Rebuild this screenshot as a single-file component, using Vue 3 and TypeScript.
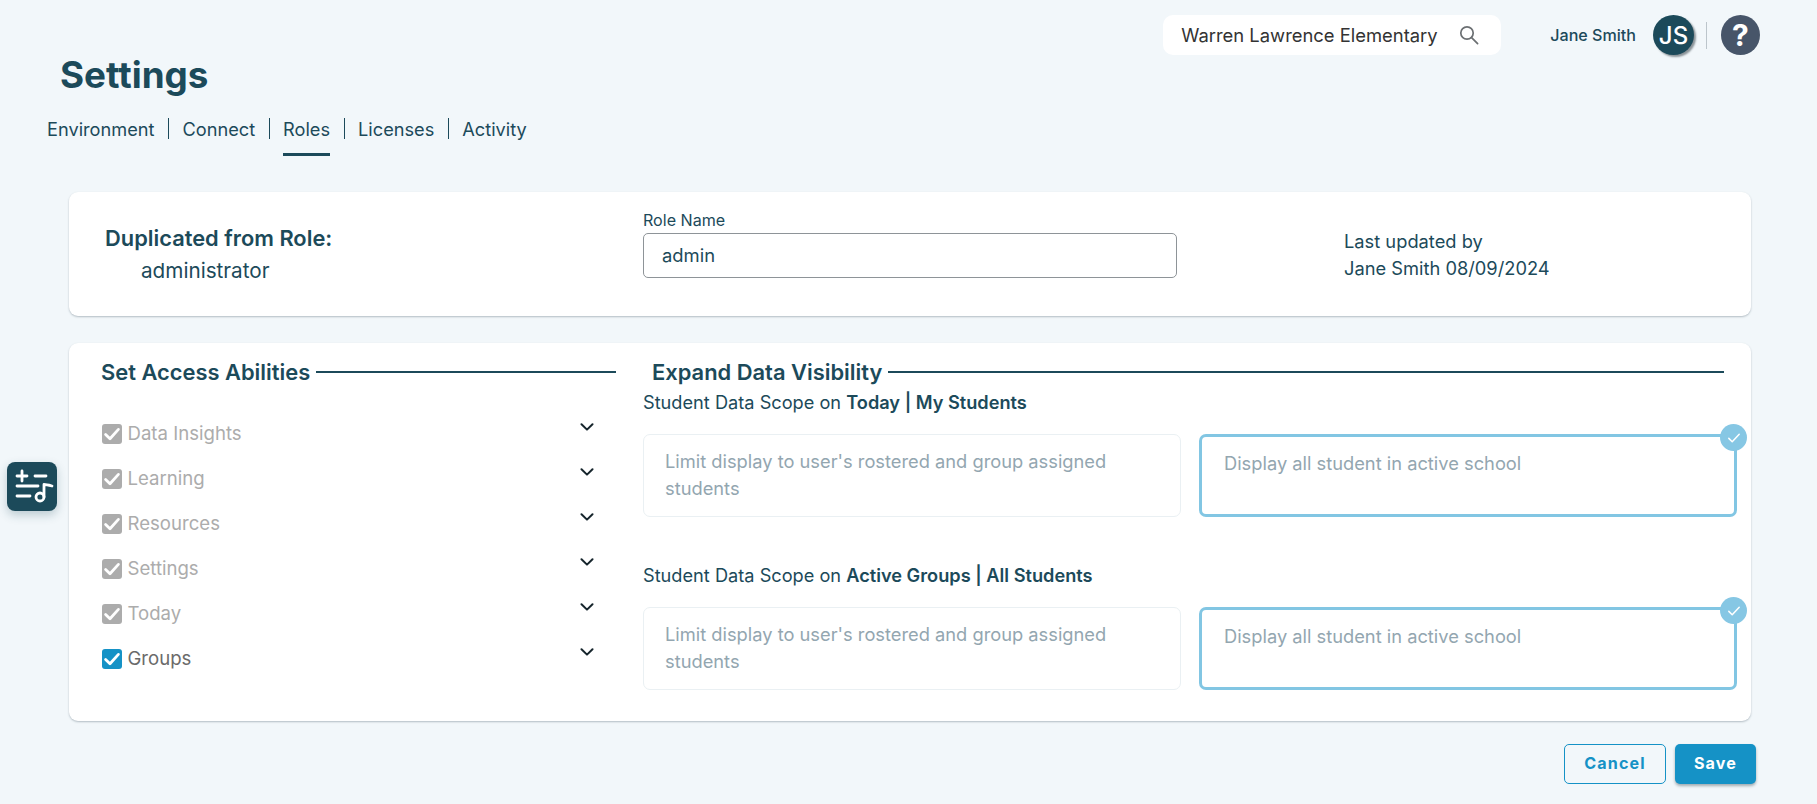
<script setup lang="ts">
interface Ability { label: string; active?: boolean }
const tabs: string[] = ['Environment', 'Connect', 'Roles', 'Licenses', 'Activity']
const abilities: Ability[] = [
  { label: 'Data Insights' },
  { label: 'Learning' },
  { label: 'Resources' },
  { label: 'Settings' },
  { label: 'Today' },
  { label: 'Groups', active: true },
]
const scopes = [
  { prefix: 'Student Data Scope on ', name: 'Today | My Students' },
  { prefix: 'Student Data Scope on ', name: 'Active Groups | All Students' },
]
</script>

<template>
  <div class="page">
    <header class="topbar">
      <div class="search">
        <span class="school">Warren Lawrence Elementary</span>
        <svg class="search-icon" viewBox="0 0 20 20" width="20" height="20" fill="none" stroke="#6b6f72" stroke-width="1.7">
          <circle cx="8" cy="8" r="6.2" />
          <path d="M12.6 12.6 L18.6 18.6" stroke-linecap="round" />
        </svg>
      </div>
      <span class="user">Jane Smith</span>
      <div class="avatar">JS</div>
      <div class="vr"></div>
      <div class="help">?</div>
    </header>

    <h1 class="title">Settings</h1>

    <nav class="tabs">
      <a v-for="t in tabs" :key="t" class="tab" :class="{ current: t === 'Roles' }">{{ t }}</a>
    </nav>

    <button class="float-btn" aria-label="tools">
      <svg viewBox="0 0 50 49" width="50" height="49" fill="none" stroke="#fff" stroke-width="2.8" stroke-linecap="round" stroke-linejoin="round">
        <path d="M10 14h10M15 9v10M28 14h11M10 24h21M10 34h13" />
        <circle cx="33" cy="35" r="4" />
        <path d="M37 35V22.5c2 0 4 .5 8 1.5" />
      </svg>
    </button>

    <main class="content">
      <section class="card info">
        <div class="origin">
          <div class="origin-title">Duplicated from Role:</div>
          <div class="origin-name">administrator</div>
        </div>
        <div class="name-field">
          <label class="field-label">Role Name</label>
          <div class="input">admin</div>
        </div>
        <div class="updated">Last updated by<br />Jane Smith 08/09/2024</div>
      </section>

      <section class="card perms">
        <div class="abilities">
          <div class="heading"><h2>Set Access Abilities</h2><span class="rule"></span></div>
          <ul class="list">
            <li v-for="a in abilities" :key="a.label" class="row" :class="{ active: a.active }">
              <span class="check">
                <svg viewBox="0 0 20 20" width="20" height="20" fill="none" stroke="#fff" stroke-width="2.8" stroke-linecap="round" stroke-linejoin="round">
                  <path d="M3.6 10.4l4.4 4.4 8.4-9.4" />
                </svg>
              </span>
              <span class="row-label">{{ a.label }}</span>
              <svg class="chev" viewBox="0 0 14 8" width="14" height="8" fill="none" stroke="#16252c" stroke-width="2" stroke-linecap="round" stroke-linejoin="round">
                <path d="M1.5 1.2L7 6.6l5.5-5.4" />
              </svg>
            </li>
          </ul>
        </div>

        <div class="visibility">
          <div class="heading vis-heading"><h2>Expand Data Visibility</h2><span class="rule"></span></div>
          <div v-for="s in scopes" :key="s.name" class="scope">
            <p class="scope-label">{{ s.prefix }}<b>{{ s.name }}</b></p>
            <div class="options">
              <div class="option">Limit display to user's rostered and group assigned students</div>
              <div class="option selected">
                Display all student in active school
                <span class="tick">
                  <svg viewBox="0 0 16 16" width="16" height="16" fill="none" stroke="#fff" stroke-width="1.5" stroke-linecap="round" stroke-linejoin="round">
                    <path d="M2.8 8.4l3.4 3.4 7-7.6" />
                  </svg>
                </span>
              </div>
            </div>
          </div>
        </div>
      </section>

      <div class="actions">
        <button class="btn cancel">Cancel</button>
        <button class="btn save">Save</button>
      </div>
    </main>
  </div>
</template>

<style>
html, body { margin: 0; background: #f2f7fa; }
</style>

<style scoped>
.page {
  position: relative;
  height: 804px;
  overflow: hidden;
  background: #f2f7fa;
  font-family: Inter, "Noto Sans", sans-serif;
  color: #1c4a5a;
}
.topbar {
  display: flex;
  align-items: center;
  justify-content: flex-end;
  height: 40px;
  padding: 15px 57px 0 0;
}
.search {
  box-sizing: border-box;
  width: 338px;
  height: 40px;
  display: flex;
  align-items: center;
  padding: 0 18px;
  background: #fff;
  border-radius: 10px;
  margin-right: 49px;
}
.school { font-size: 18.4px; color: #333; white-space: nowrap; }
.search-icon { margin-left: 21px; flex: none; }
.user { font-size: 16.1px; font-weight: 500; color: #1c4a5a; margin-right: 17px; }
.avatar {
  width: 41px;
  height: 40px;
  border-radius: 50%;
  background: #1c4a5a;
  color: #fff;
  font-size: 24px;
  font-weight: 500;
  display: flex;
  align-items: center;
  justify-content: center;
  box-shadow: 2px 2px 2px #8b9398;
}
.vr { width: 1px; height: 27px; background: #bcc5cb; margin: 0 14px 0 12px; }
.help {
  width: 39px;
  height: 40px;
  border-radius: 50%;
  background: #475569;
  color: #fff;
  font-size: 30px;
  font-weight: 700;
  display: flex;
  align-items: center;
  justify-content: center;
}
.title {
  margin: 2px 0 0 60px;
  font-size: 36.8px;
  line-height: 36px;
  font-weight: 700;
  color: #1c4a5a;
}
.tabs { display: flex; margin: 25px 0 0 33.5px; }
.tab {
  position: relative;
  padding: 0 13.5px;
  height: 21px;
  line-height: 23px;
  font-size: 18.2px;
  color: #1c4a5a;
  border-right: 1px solid #1c4a5a;
}
.tab:last-child { border-right: none; }
.tab.current::after {
  content: "";
  position: absolute;
  left: 13px;
  right: 14px;
  top: 35px;
  height: 3px;
  background: #1c4a5a;
}
.float-btn {
  position: absolute;
  left: 7px;
  top: 462px;
  width: 50px;
  height: 49px;
  padding: 0;
  border: 0;
  border-radius: 8px;
  background: #1c4a5a;
  box-shadow: 0 4px 10px rgba(28, 74, 90, 0.25);
}
.float-btn svg { display: block; }
.content { margin: 53px 0 0 69px; width: 1682px; }
.card {
  background: #fff;
  border-radius: 9px;
  box-shadow: 0 1px 2px rgba(60, 80, 95, 0.35);
}
.info {
  display: flex;
  align-items: flex-start;
  height: 124px;
}
.origin { width: 538px; margin-left: 36px; padding-top: 34px; }
.origin-title { font-size: 21.85px; line-height: 24px; font-weight: 600; }
.origin-name { font-size: 20.7px; line-height: 24px; margin: 9px 0 0 36px; }
.name-field { width: 534px; padding-top: 19px; }
.field-label { display: block; font-size: 16.1px; line-height: 18px; color: #1c4a5a; }
.input {
  box-sizing: border-box;
  height: 45px;
  margin-top: 4px;
  padding: 0 18px;
  border: 1px solid #8e9498;
  border-radius: 5px;
  font-size: 18.4px;
  line-height: 43px;
  color: #1c4a5a;
}
.updated { margin: 36px 0 0 167px; font-size: 18.3px; line-height: 27px; color: #1c4a5a; }
.perms {
  display: flex;
  margin-top: 27px;
  padding: 17px 0 27px 32px;
}
.abilities { width: 515px; margin-right: 27px; }
.heading { display: flex; align-items: center; height: 24px; }
.heading h2 { margin: 0; font-size: 21.9px; line-height: 24px; font-weight: 600; white-space: nowrap; }
.rule { flex: 1; height: 2px; background: #1c4a5a; margin-left: 6px; }
.list { list-style: none; margin: 40px 0 0 1px; padding: 0; }
.row { display: flex; align-items: flex-start; height: 45px; }
.check {
  width: 20px;
  height: 20px;
  border-radius: 3px;
  background: #acacac;
  display: block;
  flex: none;
}
.check svg { display: block; }
.row.active .check { background: #1592c6; }
.row-label { margin: -1px 0 0 5.5px; font-size: 18.6px; line-height: 20px; color: #acacac; }
.row.active .row-label { color: #6a6a6a; }
.chev { margin: -1px 22px 0 auto; }
.visibility { flex: 1; min-width: 0; padding-right: 14px; }
.vis-heading { margin: 0 13px 0 9px; }
.scope-label { margin: 8px 0 0; font-size: 18.2px; line-height: 20px; color: #1c4a5a; }
.scope-label b { font-weight: 600; }
.scope + .scope { margin-top: 48px; }
.scope + .scope .scope-label { margin-top: 0; }
.options { display: grid; grid-template-columns: 538px 538px; column-gap: 18px; margin-top: 22px; }
.option {
  position: relative;
  box-sizing: border-box;
  height: 83px;
  padding: 13px 21px;
  border: 1px solid #eaf0f3;
  border-radius: 7px;
  font-size: 18.3px;
  line-height: 27px;
  color: #93a6b0;
}
.option.selected { border: 3px solid #82c6e3; padding: 13px 22px; }
.tick {
  position: absolute;
  right: -13px;
  top: -13px;
  width: 27px;
  height: 27px;
  border-radius: 50%;
  background: #86c7e4;
  display: flex;
  align-items: center;
  justify-content: center;
}
.actions { display: flex; justify-content: flex-end; gap: 9px; margin: 23px -5px 0 0; }
.btn {
  box-sizing: border-box;
  height: 40px;
  padding-bottom: 3px;
  border-radius: 5px;
  font-family: inherit;
  font-size: 16.1px;
  font-weight: 700;
  letter-spacing: 1.15px;
}
.cancel { width: 102px; background: transparent; border: 1px solid #1592c6; color: #1592c6; }
.save { width: 81px; background: #1592c6; border: 0; color: #fff; box-shadow: 0 2px 3px rgba(40, 60, 70, 0.4); }
</style>
